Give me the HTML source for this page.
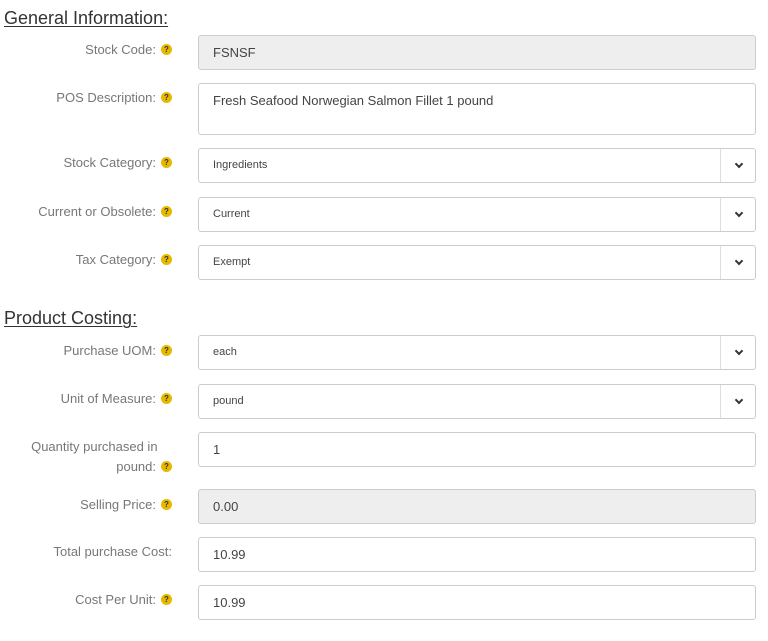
<!DOCTYPE html>
<html><head><style>
body{margin:0;width:768px;height:641px;background:#fff;font-family:"Liberation Sans",sans-serif;position:relative;overflow:hidden}
h2{position:absolute;left:4px;margin:0;font-size:18px;font-weight:normal;color:#333;text-decoration:underline;text-decoration-thickness:1px;text-underline-offset:2px}
.l{position:absolute;right:596px;font-size:13px;color:#777;text-align:right;line-height:20px}
.q{display:inline-block;width:11px;height:11px;border-radius:50%;background:#e6b800;color:#333;font-size:8px;line-height:11px;text-align:center;font-weight:bold;vertical-align:middle;margin-left:5px;position:relative;top:-1px}
.i{position:absolute;left:198px;width:556px;height:33px;border:1px solid #ccc;border-radius:3px;box-sizing:content-box;font-size:13px;color:#444;line-height:33px}
.i span{margin-left:14px}
.g{background:#eee}
.s{font-size:11px}
.s:after{content:"";position:absolute;right:0;top:0;width:34px;height:33px;border-left:1px solid #ddd}
.s b{position:absolute;right:13px;top:12px;width:4px;height:4px;border-right:2px solid #333;border-bottom:2px solid #333;transform:rotate(45deg)}
</style></head><body>
<h2 style="top:8px">General Information:</h2>
<div class="l" style="top:40px">Stock Code:<span class="q">?</span></div>
<div class="i g" style="top:35px"><span>FSNSF</span></div>
<div class="l" style="top:88px">POS Description:<span class="q">?</span></div>
<div class="i" style="top:83px;height:50px;line-height:33px"><span>Fresh Seafood Norwegian Salmon Fillet 1 pound</span></div>
<div class="l" style="top:153px">Stock Category:<span class="q">?</span></div>
<div class="i s" style="top:148px"><span>Ingredients</span><b></b></div>
<div class="l" style="top:202px">Current or Obsolete:<span class="q">?</span></div>
<div class="i s" style="top:197px"><span>Current</span><b></b></div>
<div class="l" style="top:250px">Tax Category:<span class="q">?</span></div>
<div class="i s" style="top:245px"><span>Exempt</span><b></b></div>
<h2 style="top:308px">Product Costing:</h2>
<div class="l" style="top:341px">Purchase UOM:<span class="q">?</span></div>
<div class="i s" style="top:335px"><span>each</span><b></b></div>
<div class="l" style="top:389px">Unit of Measure:<span class="q">?</span></div>
<div class="i s" style="top:384px"><span>pound</span><b></b></div>
<div class="l" style="top:437px;right:596px">Quantity purchased in&nbsp;&nbsp;&nbsp;&nbsp;<br>pound:<span class="q">?</span></div>
<div class="i" style="top:432px"><span>1</span></div>
<div class="l" style="top:495px">Selling Price:<span class="q">?</span></div>
<div class="i g" style="top:489px"><span>0.00</span></div>
<div class="l" style="top:542px">Total purchase Cost:</div>
<div class="i" style="top:537px"><span>10.99</span></div>
<div class="l" style="top:590px">Cost Per Unit:<span class="q">?</span></div>
<div class="i" style="top:585px"><span>10.99</span></div>
</body></html>
